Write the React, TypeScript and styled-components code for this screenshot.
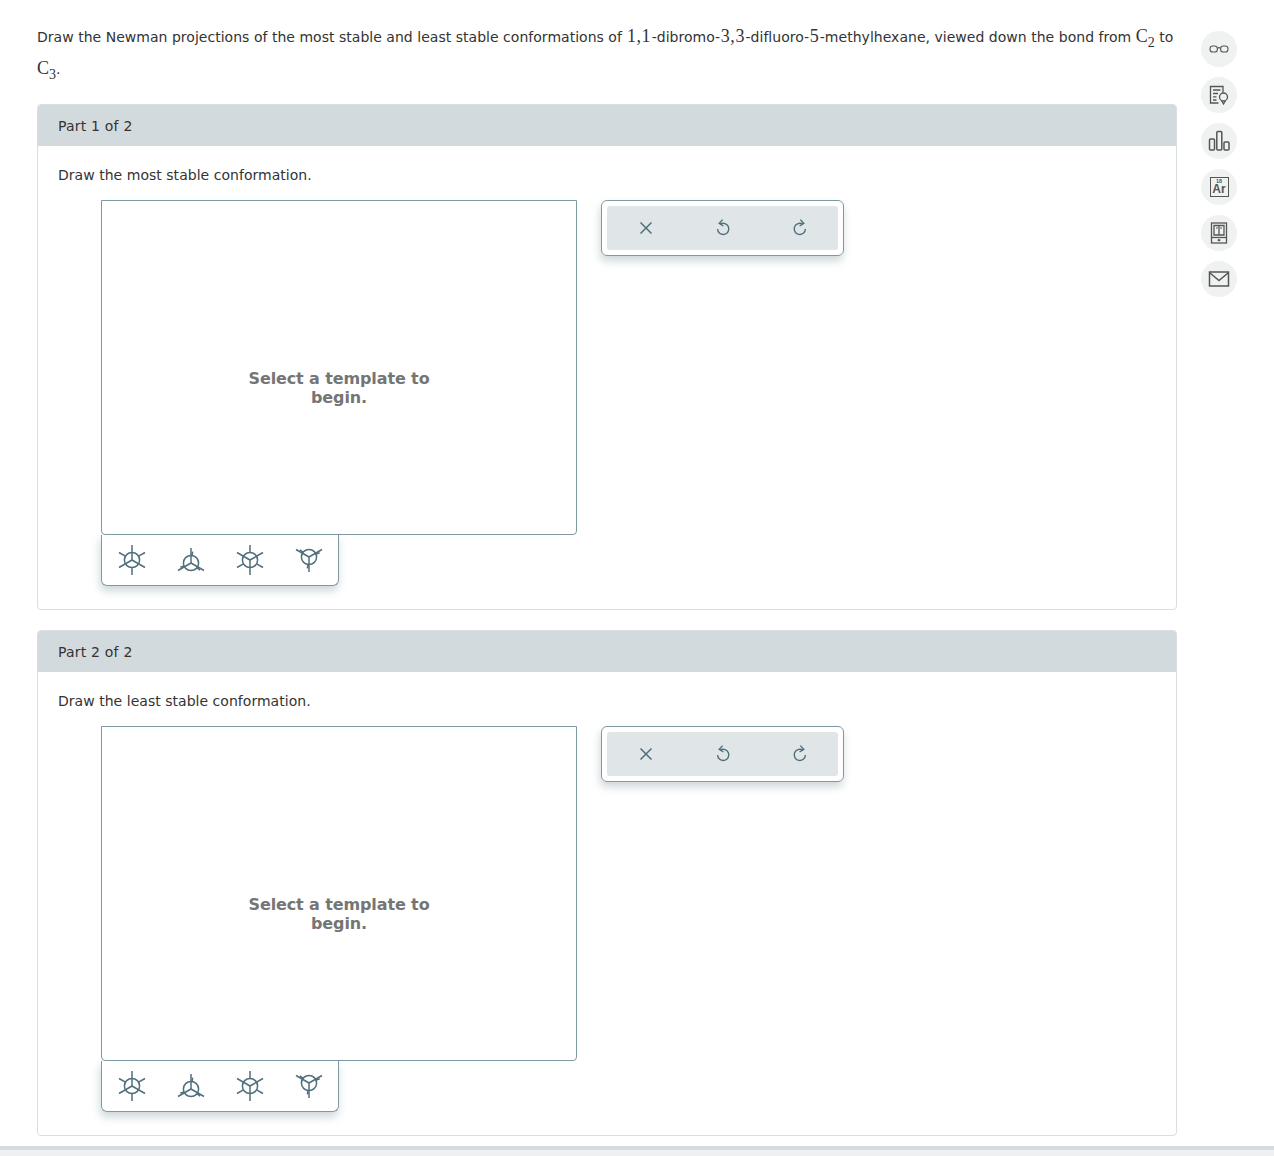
import React from "react";
import styled, { createGlobalStyle } from "styled-components";

const Global = createGlobalStyle`
  html, body { margin: 0; padding: 0; background: #fff; }
  body { font-family: "DejaVu Sans", Verdana, sans-serif; color: #333; letter-spacing: 0.03px; }
`;

const Page = styled.div`
  position: relative;
  width: 1274px;
  height: 1156px;
  overflow: hidden;
  display: flex;
  flex-direction: column;
`;
const Content = styled.div`
  flex: 1;
  display: flex;
  align-items: flex-start;
  padding: 21px 0 0 37px;
  gap: 24px;
`;
const Main = styled.main`
  width: 1140px;
  display: flex;
  flex-direction: column;
  gap: 20px;
`;
const Question = styled.p`
  margin: 0 0 1px;
  font-size: 14px;
  line-height: 31px;
  height: 62px;
  color: #333;
  white-space: nowrap;
  letter-spacing: 0.025px;
`;
const Mth = styled.span`
  font-family: "Liberation Serif", "Times New Roman", serif;
  font-size: 18px;
  color: #333;
  letter-spacing: 0.6px;
  margin: 0 0.5px;
`;
const Chem = styled.span`
  font-family: "Liberation Serif", "Times New Roman", serif;
  font-size: 18px;
  color: #333;
  letter-spacing: 0;
`;
const Sub = styled.sub`
  font-size: 14px;
  line-height: 0;
  vertical-align: -5px;
`;
const Part = styled.section`
  border: 1px solid #d9dee0;
  border-radius: 4px;
  overflow: hidden;
  height: 506px;
  box-sizing: border-box;
`;
const PartHead = styled.div`
  margin: -1px -1px 0;
  height: 42px;
  box-sizing: border-box;
  padding: 2px 0 0 21px;
  background: #d3dadd;
  display: flex;
  align-items: center;
  font-size: 14px;
  letter-spacing: 0.2px;
  color: #333;
`;
const PartBody = styled.div`
  padding: 20px 20px 0 20px;
`;
const Prompt = styled.div`
  font-size: 14px;
  line-height: 18px;
  color: #333;
  margin-bottom: 16px;
`;
const Workspace = styled.div`
  display: flex;
  align-items: flex-start;
  gap: 24px;
  padding-left: 43px;
  padding-bottom: 20px;
`;
const CanvasCol = styled.div`
  display: flex;
  flex-direction: column;
  align-items: flex-start;
`;
const Canvas = styled.div`
  width: 476px;
  height: 335px;
  box-sizing: border-box;
  border: 1px solid #7f99a3;
  border-radius: 0 0 4px 4px;
  display: flex;
  align-items: center;
  justify-content: center;
  padding-top: 40px;
`;
const Hint = styled.div`
  width: 200px;
  text-align: center;
  font-size: 16px;
  font-weight: 700;
  letter-spacing: -0.12px;
  line-height: 19px;
  color: #757575;
`;
const TemplateBar = styled.div`
  width: 238px;
  height: 51px;
  box-sizing: border-box;
  border: 1px solid #7f99a3;
  border-top: 0;
  border-radius: 0 0 6px 6px;
  box-shadow: -1px 5px 9px rgba(80, 110, 120, 0.28);
  display: flex;
  align-items: center;
  padding-left: 1px;
`;
const TemplateBtn = styled.button`
  width: 59px;
  height: 50px;
  padding: 0;
  border: 0;
  background: none;
  display: flex;
  align-items: center;
  justify-content: center;
`;
const Tools = styled.div`
  width: 243px;
  height: 56px;
  box-sizing: border-box;
  padding: 5px;
  border: 1px solid #7f99a3;
  border-radius: 6px;
  box-shadow: -1px 5px 9px rgba(80, 110, 120, 0.28);
`;
const ToolsInner = styled.div`
  height: 100%;
  background: #e0e5e7;
  border-radius: 3px;
  display: grid;
  grid-template-columns: 77px 77px 77px;
`;
const ToolBtn = styled.button`
  border: 0;
  padding: 0;
  background: none;
  display: flex;
  align-items: center;
  justify-content: center;
`;
const Rail = styled.aside`
  display: flex;
  flex-direction: column;
  gap: 10px;
  padding-top: 10px;
`;
const RailBtn = styled.button`
  width: 36px;
  height: 36px;
  border-radius: 50%;
  border: 0;
  padding: 0;
  background: #f0f2f2;
  display: flex;
  align-items: center;
  justify-content: center;
`;
const Tile = styled.span`
  width: 19px;
  height: 20px;
  box-sizing: border-box;
  border: 1.5px solid #555;
  display: flex;
  flex-direction: column;
  align-items: center;
  color: #555;
  font-family: "Liberation Sans", Arial, sans-serif;
  font-weight: 700;
  letter-spacing: 0;
`;
const TileNum = styled.span`
  font-size: 5.5px;
  line-height: 5px;
  margin-top: 1px;
`;
const TileSym = styled.span`
  font-size: 12px;
  line-height: 11px;
`;
const Footer = styled.div`
  height: 10px;
  box-sizing: border-box;
  border-top: 4px solid #d5dbde;
  background: #eef0f1;
`;

const STROKE = "#4f6f7c";
const pol = (r: number, deg: number) => {
  const a = (deg * Math.PI) / 180;
  return [16 + r * Math.sin(a), 16 - r * Math.cos(a)];
};
const spoke = (from: number, to: number, deg: number) => {
  const [x1, y1] = pol(from, deg);
  const [x2, y2] = pol(to, deg);
  return `M${x1.toFixed(2)} ${y1.toFixed(2)}L${x2.toFixed(2)} ${y2.toFixed(2)}`;
};

type NewmanProps = { front: number[]; back: number[]; dy: number; backSkew?: number; backEnd?: number };
const Newman = ({ front, back, dy, backSkew = 0, backEnd = 15 }: NewmanProps) => (
  <svg width="32" height="40" viewBox="0 -4 32 40" fill="none" stroke={STROKE} strokeWidth="1.5">
    <g transform={`translate(0 ${dy})`}>
      <circle cx="16" cy="16" r="7.6" />
      {front.map((d) => (
        <path key={d} d={spoke(0, 15, d)} />
      ))}
      {back.map((d) => (
        <path key={d} d={spoke(7.6, backEnd, d + backSkew)} />
      ))}
    </g>
  </svg>
);

const TEMPLATES: NewmanProps[] = [
  { front: [0, 120, 240], back: [60, 180, 300], dy: 0 },
  { front: [0, 120, 240], back: [0, 120, 240], dy: 3, backSkew: 8, backEnd: 11.5 },
  { front: [60, 180, 300], back: [0, 120, 240], dy: 0 },
  { front: [60, 180, 300], back: [60, 180, 300], dy: -3, backSkew: 8, backEnd: 11.5 },
];

const IconX = () => (
  <svg width="16" height="16" viewBox="0 0 16 16" fill="none" stroke={STROKE} strokeWidth="1.5">
    <path d="M2.5 2.5L13.5 13.5M13.5 2.5L2.5 13.5" />
  </svg>
);
const IconUndo = () => (
  <svg width="16" height="20" viewBox="0 0 16 20" fill="none" stroke={STROKE} strokeWidth="1.4">
    <path d="M5.2 6.2A5.6 5.6 0 1 1 2.6 11" />
    <path d="M7.6 1.6L4.2 5.4L8.4 8" />
  </svg>
);
const IconRedo = () => (
  <svg width="16" height="20" viewBox="0 0 16 20" fill="none" stroke={STROKE} strokeWidth="1.4">
    <path d="M10.8 6.2A5.6 5.6 0 1 0 13.4 11" />
    <path d="M8.4 1.6L11.8 5.4L7.6 8" />
  </svg>
);

const I = "#555";
const Glasses = () => (
  <svg width="20" height="20" viewBox="0 0 20 20" fill="none" stroke={I} strokeWidth="1.1">
    <rect x="1" y="7" width="7.4" height="6" rx="2.8" />
    <rect x="11.6" y="7" width="7.4" height="6" rx="2.8" />
    <path d="M8.4 9.2Q10 8 11.6 9.2" />
  </svg>
);
const DocBulb = () => (
  <svg width="22" height="22" viewBox="0 0 22 22" fill="none" stroke={I} strokeWidth="1.3">
    <path d="M15 8.5V2.5H2.5V19H10.5" />
    <path d="M5 6H12.5M5 9.5H10M5 12.8H8.5M5 16H8.5" />
    <circle cx="15.5" cy="13" r="4" />
    <path d="M13.6 16.6L15.5 20L17.4 16.6" />
  </svg>
);
const Bars = () => (
  <svg width="22" height="24" viewBox="0 0 22 24" fill="none" stroke={I} strokeWidth="1.5">
    <rect x="1.5" y="10" width="5" height="11" rx="1" />
    <rect x="8.8" y="2.5" width="5" height="18.5" rx="1" />
    <rect x="16" y="13" width="5" height="8" rx="1" />
  </svg>
);
const BookTablet = () => (
  <svg width="18" height="22" viewBox="0 0 18 22" fill="none" stroke={I} strokeWidth="1.3">
    <rect x="1.5" y="1" width="15" height="20" />
    <path d="M1.5 15.5H16.5" />
    <path d="M4 3.5H14V13H4ZM9 3.5V13M6.3 6H7.6M10.4 6H11.7" />
    <rect x="7.7" y="17.2" width="2.6" height="2" fill={I} stroke="none" />
  </svg>
);
const Mail = () => (
  <svg width="22" height="18" viewBox="0 0 22 18" fill="none" stroke={I} strokeWidth="1.5">
    <rect x="1.5" y="2" width="19" height="14" />
    <path d="M2 3L11 10.5L20 3" />
  </svg>
);

const PartCard = ({ n, prompt }: { n: number; prompt: string }) => (
  <Part>
    <PartHead>Part {n} of 2</PartHead>
    <PartBody>
      <Prompt>{prompt}</Prompt>
      <Workspace>
        <CanvasCol>
          <Canvas>
            <Hint>Select a template to begin.</Hint>
          </Canvas>
          <TemplateBar>
            {TEMPLATES.map((t, i) => (
              <TemplateBtn key={i} aria-label={`Template ${i + 1}`}>
                <Newman {...t} />
              </TemplateBtn>
            ))}
          </TemplateBar>
        </CanvasCol>
        <Tools>
          <ToolsInner>
            <ToolBtn aria-label="Clear"><IconX /></ToolBtn>
            <ToolBtn aria-label="Undo"><IconUndo /></ToolBtn>
            <ToolBtn aria-label="Redo"><IconRedo /></ToolBtn>
          </ToolsInner>
        </Tools>
      </Workspace>
    </PartBody>
  </Part>
);

export default function App() {
  return (
    <Page>
      <Global />
      <Content>
        <Main>
          <Question>
            Draw the Newman projections of the most stable and least stable conformations of{" "}
            <Mth>1,1</Mth>-dibromo-<Mth>3,3</Mth>-difluoro-<Mth>5</Mth>-methylhexane, viewed down the bond from{" "}
            <Chem>C<Sub>2</Sub></Chem> to
            <br />
            <Chem>C<Sub>3</Sub></Chem>.
          </Question>
          <PartCard n={1} prompt="Draw the most stable conformation." />
          <PartCard n={2} prompt="Draw the least stable conformation." />
        </Main>
        <Rail>
          <RailBtn aria-label="Reading"><Glasses /></RailBtn>
          <RailBtn aria-label="Hints"><DocBulb /></RailBtn>
          <RailBtn aria-label="Stats"><Bars /></RailBtn>
          <RailBtn aria-label="Periodic table">
            <Tile><TileNum>18</TileNum><TileSym>Ar</TileSym></Tile>
          </RailBtn>
          <RailBtn aria-label="Book"><BookTablet /></RailBtn>
          <RailBtn aria-label="Message"><Mail /></RailBtn>
        </Rail>
      </Content>
      <Footer />
    </Page>
  );
}
